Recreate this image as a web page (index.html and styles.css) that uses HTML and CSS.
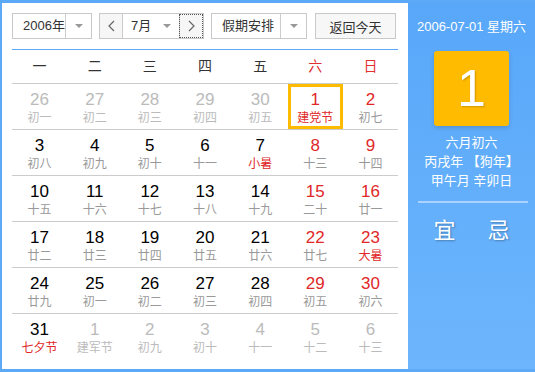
FILE: index.html
```html
<!DOCTYPE html>
<html lang="zh-CN">
<head>
<meta charset="UTF-8" />
<meta name="viewport" content="width=device-width, initial-scale=1" />
<title>万年历</title>
<link rel="stylesheet" href="styles.css">
</head>
<body>
  <div class="calendar">
    <div class="main">
      <div class="toolbar">
        <div class="select year">
          <span class="val">2006年</span>
          <span class="drop"><i class="arrow"></i></span>
        </div>
        <div class="month-group">
          <span class="nav prev">
            <svg width="7" height="12" viewBox="0 0 7 12"><polyline points="6,1 1,6 6,11" fill="none" stroke="#666" stroke-width="1.2"/></svg>
          </span>
          <span class="month"><span class="val">7月</span><i class="arrow"></i></span>
          <span class="nav next">
            <svg width="7" height="12" viewBox="0 0 7 12"><polyline points="1,1 6,6 1,11" fill="none" stroke="#666" stroke-width="1.2"/></svg>
          </span>
        </div>
        <div class="select holiday">
          <span class="val">假期安排</span>
          <span class="drop"><i class="arrow"></i></span>
        </div>
        <button class="today">返回今天</button>
      </div>

      <div class="week">
        <span>一</span><span>二</span><span>三</span><span>四</span><span>五</span>
        <span class="red">六</span><span class="red">日</span>
      </div>

      <div class="days">
        <div class="day other"><b>26</b><small>初一</small></div>
        <div class="day other"><b>27</b><small>初二</small></div>
        <div class="day other"><b>28</b><small>初三</small></div>
        <div class="day other"><b>29</b><small>初四</small></div>
        <div class="day other"><b>30</b><small>初五</small></div>
        <div class="day weekend selected"><b>1</b><small class="fest">建党节</small></div>
        <div class="day weekend"><b>2</b><small>初七</small></div>

        <div class="day"><b>3</b><small>初八</small></div>
        <div class="day"><b>4</b><small>初九</small></div>
        <div class="day"><b>5</b><small>初十</small></div>
        <div class="day"><b>6</b><small>十一</small></div>
        <div class="day"><b>7</b><small class="fest">小暑</small></div>
        <div class="day weekend"><b>8</b><small>十三</small></div>
        <div class="day weekend"><b>9</b><small>十四</small></div>

        <div class="day"><b>10</b><small>十五</small></div>
        <div class="day"><b>11</b><small>十六</small></div>
        <div class="day"><b>12</b><small>十七</small></div>
        <div class="day"><b>13</b><small>十八</small></div>
        <div class="day"><b>14</b><small>十九</small></div>
        <div class="day weekend"><b>15</b><small>二十</small></div>
        <div class="day weekend"><b>16</b><small>廿一</small></div>

        <div class="day"><b>17</b><small>廿二</small></div>
        <div class="day"><b>18</b><small>廿三</small></div>
        <div class="day"><b>19</b><small>廿四</small></div>
        <div class="day"><b>20</b><small>廿五</small></div>
        <div class="day"><b>21</b><small>廿六</small></div>
        <div class="day weekend"><b>22</b><small>廿七</small></div>
        <div class="day weekend"><b>23</b><small class="fest">大暑</small></div>

        <div class="day"><b>24</b><small>廿九</small></div>
        <div class="day"><b>25</b><small>初一</small></div>
        <div class="day"><b>26</b><small>初二</small></div>
        <div class="day"><b>27</b><small>初三</small></div>
        <div class="day"><b>28</b><small>初四</small></div>
        <div class="day weekend"><b>29</b><small>初五</small></div>
        <div class="day weekend"><b>30</b><small>初六</small></div>

        <div class="day"><b>31</b><small class="fest">七夕节</small></div>
        <div class="day other"><b>1</b><small>建军节</small></div>
        <div class="day other"><b>2</b><small>初九</small></div>
        <div class="day other"><b>3</b><small>初十</small></div>
        <div class="day other"><b>4</b><small>十一</small></div>
        <div class="day other"><b>5</b><small>十二</small></div>
        <div class="day other"><b>6</b><small>十三</small></div>
      </div>
    </div>

    <div class="side">
      <div class="date">2006-07-01 星期六</div>
      <div class="big-day">1</div>
      <div class="lunar">
        <p>六月初六</p>
        <p>丙戌年 【狗年】</p>
        <p>甲午月 辛卯日</p>
      </div>
      <div class="divider"></div>
      <div class="yiji">
        <span>宜</span>
        <span>忌</span>
      </div>
    </div>
  </div>
</body>
</html>
```

FILE: styles.css
```css
* {
  box-sizing: border-box;
}
body {
  margin: 0;
  font-family: "Liberation Sans", Arial, "Noto Sans CJK SC", sans-serif;
  background: #fff;
}
.calendar {
  display: flex;
  width: 535px;
  height: 372px;
  border-top: 3px solid #5ca9f8;
  border-bottom: 3px solid #5ca9f8;
  border-left: 2px solid #5ca9f8;
  background: #5ca9f8;
}
.main {
  width: 406px;
  background: #fff;
  padding: 10px 10px 0 10px;
}

/* toolbar */
.toolbar {
  display: flex;
  height: 26px;
  font-size: 13px;
  color: #333;
}
.select,
.month-group,
.today {
  display: flex;
  align-items: center;
  height: 26px;
  border: 1px solid #c9c9c9;
  background: #fff;
}
.select .val {
  flex: 1;
  padding-left: 10px;
  line-height: 24px;
}
.select .drop {
  display: flex;
  align-items: center;
  justify-content: center;
  width: 26px;
  height: 24px;
  border-left: 1px solid #ccc;
}
.arrow {
  width: 0;
  height: 0;
  border-left: 4px solid transparent;
  border-right: 4px solid transparent;
  border-top: 4px solid #999;
}
.year {
  width: 80px;
}
.month-group {
  width: 105px;
  margin-left: 7px;
}
.nav {
  display: flex;
  align-items: center;
  justify-content: center;
  width: 23px;
  height: 24px;
  background: #f6f6f6;
}
.nav.prev {
  border-right: 1px solid #ccc;
}
.nav.next {
  width: 24px;
  border-left: 1px solid #ccc;
  outline: 1px dotted #555;
  outline-offset: -1px;
}
.month {
  flex: 1;
  display: flex;
  align-items: center;
  padding-left: 8px;
  line-height: 24px;
}
.month .val {
  flex: 1;
}
.month .arrow {
  margin-right: 8px;
}
.holiday {
  width: 96px;
  margin-left: 7px;
}
.today {
  width: 81px;
  margin-left: 8px;
  justify-content: center;
  background: #f7f7f7;
  font-family: inherit;
  font-size: 13px;
  color: #333;
  padding: 0;
}

/* week header */
.week {
  display: grid;
  grid-template-columns: repeat(7, 1fr);
  margin-top: 10px;
  height: 35px;
  border-top: 1px solid #5ca9f8;
  border-bottom: 1px solid #ccc;
  font-size: 14px;
  color: #333;
}
.week span {
  text-align: center;
  line-height: 33px;
}
.week .red {
  color: #e23030;
}

/* days */
.days {
  display: grid;
  grid-template-columns: repeat(7, 1fr);
}
.day {
  height: 46px;
  border-bottom: 1px solid #ccc;
  padding-top: 6px;
  text-align: center;
}
.day:nth-last-child(-n+7) {
  border-bottom: none;
}
.day b {
  display: block;
  font-weight: normal;
  font-size: 17px;
  line-height: 20px;
  color: #000;
}
.day small {
  display: block;
  font-size: 12px;
  line-height: 16px;
  color: #999;
}
.day.weekend b {
  color: #e02828;
}
.day .fest {
  color: #e02828;
}
.day.other b,
.day.other small {
  color: #bbb;
}
.day.selected {
  box-shadow: inset 0 0 0 3px #ffbb00;
}

/* right panel */
.side {
  flex: 1;
  background: linear-gradient(#58a7f9, #6db6fd);
  color: #fff;
  text-align: center;
}
.date {
  font-size: 13px;
  line-height: 16px;
  margin-top: 16px;
}
.big-day {
  width: 75px;
  height: 75px;
  margin: 16px auto 0;
  background: #ffbb00;
  border-radius: 3px;
  box-shadow: 0 2px 4px rgba(0, 0, 0, 0.15);
  font-size: 52px;
  line-height: 75px;
  text-shadow: 1px 1px 2px rgba(0, 0, 0, 0.2);
}
.lunar {
  margin-top: 7px;
  font-size: 13px;
}
.lunar p {
  margin: 0;
  line-height: 19px;
}
.divider {
  height: 2px;
  margin: 11px 7px 0 10px;
  background: rgba(255, 255, 255, 0.45);
}
.yiji {
  display: flex;
  justify-content: center;
  gap: 32px;
  margin-top: 13px;
  font-size: 22px;
  line-height: 30px;
  text-shadow: 1px 1px 2px rgba(0, 0, 0, 0.3);
}
```
